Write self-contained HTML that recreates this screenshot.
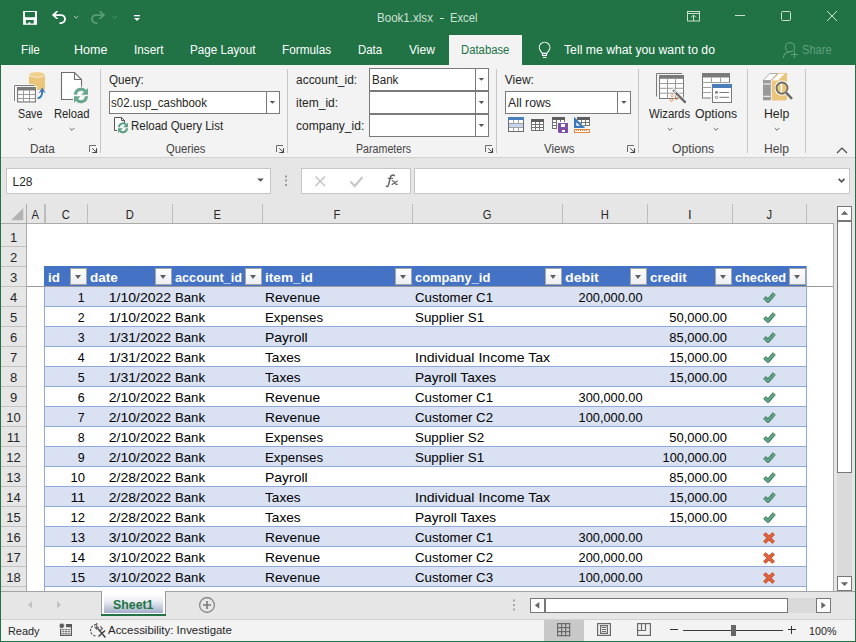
<!DOCTYPE html><html><head><meta charset="utf-8"><style>
*{margin:0;padding:0;box-sizing:border-box}
html,body{width:856px;height:642px;overflow:hidden;background:#fff;font-family:"Liberation Sans",sans-serif}
.a{position:absolute}
.t{position:absolute;white-space:nowrap;line-height:normal;z-index:5}
svg{position:absolute;overflow:visible}
</style></head><body><div class="a" style="left:0px;top:0px;width:856px;height:65px;background:#217346;"></div>
<div class="a" style="left:1px;top:65px;width:854px;height:92px;background:#f3f3f3;"></div>
<div class="a" style="left:1px;top:157px;width:854px;height:1px;background:#d2d2d2;"></div>
<div class="a" style="left:1px;top:158px;width:854px;height:45px;background:#e6e6e6;"></div>
<div class="a" style="left:1px;top:203px;width:854px;height:388px;background:#e6e6e6;"></div>
<div class="a" style="left:1px;top:591px;width:854px;height:1px;background:#a3a3a3;"></div>
<div class="a" style="left:1px;top:592px;width:854px;height:27px;background:#e6e6e6;"></div>
<div class="a" style="left:1px;top:619px;width:854px;height:1px;background:#d0d0d0;"></div>
<div class="a" style="left:1px;top:620px;width:854px;height:21px;background:#f3f3f3;"></div>
<div class="t" style="left:377.04px;top:11.14px;font-size:12px;color:#cfe1d5;font-weight:400;transform:scaleX(0.9637);transform-origin:left top;">Book1.xlsx</div>
<div class="a" style="left:440px;top:18px;width:3.5px;height:1px;background:#cfe1d5;"></div>
<div class="t" style="left:450.05px;top:11.14px;font-size:12px;color:#cfe1d5;font-weight:400;transform:scaleX(0.9336);transform-origin:left top;">Excel</div>
<div class="t" style="left:20.83px;top:43.44px;font-size:12px;color:#ffffff;font-weight:400;transform:scaleX(0.9737);transform-origin:left top;">File</div>
<div class="t" style="left:74.00px;top:43.44px;font-size:12px;color:#ffffff;font-weight:400;transform:scaleX(1.0433);transform-origin:left top;">Home</div>
<div class="t" style="left:134.03px;top:43.44px;font-size:12px;color:#ffffff;font-weight:400;transform:scaleX(0.9809);transform-origin:left top;">Insert</div>
<div class="t" style="left:190.03px;top:43.44px;font-size:12px;color:#ffffff;font-weight:400;transform:scaleX(0.9709);transform-origin:left top;">Page Layout</div>
<div class="t" style="left:282.03px;top:43.44px;font-size:12px;color:#ffffff;font-weight:400;transform:scaleX(0.9836);transform-origin:left top;">Formulas</div>
<div class="t" style="left:358.29px;top:43.44px;font-size:12px;color:#ffffff;font-weight:400;transform:scaleX(0.9529);transform-origin:left top;">Data</div>
<div class="t" style="left:408.52px;top:43.44px;font-size:12px;color:#ffffff;font-weight:400;transform:scaleX(1.0066);transform-origin:left top;">View</div>
<div class="a" style="left:449px;top:35px;width:73px;height:30px;background:#f3f3f3;"></div>
<div class="t" style="left:461.05px;top:43.44px;font-size:12px;color:#217346;font-weight:400;transform:scaleX(0.9422);transform-origin:left top;">Database</div>
<div class="t" style="left:563.61px;top:43.44px;font-size:12px;color:#ffffff;font-weight:400;transform:scaleX(1.0196);transform-origin:left top;">Tell me what you want to do</div>
<div class="t" style="left:801.86px;top:42.74px;font-size:12px;color:#5f9f7a;font-weight:400;transform:scaleX(0.9237);transform-origin:left top;">Share</div>
<div class="a" style="left:100px;top:69px;width:1px;height:84px;background:#c6c6c6;"></div>
<div class="a" style="left:287px;top:69px;width:1px;height:84px;background:#c6c6c6;"></div>
<div class="a" style="left:496px;top:69px;width:1px;height:84px;background:#c6c6c6;"></div>
<div class="a" style="left:638px;top:69px;width:1px;height:84px;background:#c6c6c6;"></div>
<div class="a" style="left:747px;top:69px;width:1px;height:84px;background:#c6c6c6;"></div>
<div class="a" style="left:805px;top:69px;width:1px;height:84px;background:#c6c6c6;"></div>
<div class="t" style="left:29.53px;top:142.44px;font-size:12px;color:#444444;font-weight:400;transform:scaleX(0.9734);transform-origin:left top;">Data</div>
<div class="t" style="left:165.55px;top:142.44px;font-size:12px;color:#444444;font-weight:400;transform:scaleX(0.9374);transform-origin:left top;">Queries</div>
<div class="t" style="left:356.32px;top:142.44px;font-size:12px;color:#444444;font-weight:400;transform:scaleX(0.8883);transform-origin:left top;">Parameters</div>
<div class="t" style="left:543.54px;top:142.44px;font-size:12px;color:#444444;font-weight:400;transform:scaleX(0.9566);transform-origin:left top;">Views</div>
<div class="t" style="left:671.91px;top:142.44px;font-size:12px;color:#444444;font-weight:400;transform:scaleX(1.0173);transform-origin:left top;">Options</div>
<div class="t" style="left:763.51px;top:142.44px;font-size:12px;color:#444444;font-weight:400;transform:scaleX(1.0115);transform-origin:left top;">Help</div>
<div class="t" style="left:17.97px;top:106.74px;font-size:12px;color:#262626;font-weight:400;transform:scaleX(0.8940);transform-origin:left top;">Save</div>
<div class="t" style="left:54.15px;top:106.74px;font-size:12px;color:#262626;font-weight:400;transform:scaleX(0.9360);transform-origin:left top;">Reload</div>
<div class="t" style="left:109.24px;top:73.34px;font-size:12px;color:#262626;font-weight:400;transform:scaleX(0.9670);transform-origin:left top;">Query:</div>
<div class="a" style="left:109px;top:91px;width:171px;height:23px;background:#fff;border:1px solid #7a7a7a"></div>
<div class="a" style="left:266px;top:92px;width:1px;height:21px;background:#7a7a7a;"></div>
<div class="t" style="left:111.34px;top:95.74px;font-size:12px;color:#262626;font-weight:400;transform:scaleX(0.9595);transform-origin:left top;">s02.usp_cashbook</div>
<div class="t" style="left:131.24px;top:118.64px;font-size:12px;color:#262626;font-weight:400;transform:scaleX(0.9591);transform-origin:left top;">Reload Query List</div>
<div class="t" style="left:295.82px;top:72.74px;font-size:12px;color:#262626;font-weight:400;transform:scaleX(0.9962);transform-origin:left top;">account_id:</div>
<div class="t" style="left:295.82px;top:95.84px;font-size:12px;color:#262626;font-weight:400;transform:scaleX(1.0031);transform-origin:left top;">item_id:</div>
<div class="t" style="left:295.82px;top:118.64px;font-size:12px;color:#262626;font-weight:400;transform:scaleX(1.0032);transform-origin:left top;">company_id:</div>
<div class="a" style="left:369px;top:68px;width:120px;height:23px;background:#fff;border:1px solid #7a7a7a"></div>
<div class="a" style="left:475px;top:69px;width:1px;height:21px;background:#7a7a7a;"></div>
<div class="a" style="left:369px;top:91px;width:120px;height:23px;background:#fff;border:1px solid #7a7a7a"></div>
<div class="a" style="left:475px;top:92px;width:1px;height:21px;background:#7a7a7a;"></div>
<div class="a" style="left:369px;top:114px;width:120px;height:23px;background:#fff;border:1px solid #7a7a7a"></div>
<div class="a" style="left:475px;top:115px;width:1px;height:21px;background:#7a7a7a;"></div>
<div class="t" style="left:372.04px;top:72.74px;font-size:12px;color:#262626;font-weight:400;transform:scaleX(0.9659);transform-origin:left top;">Bank</div>
<div class="t" style="left:504.82px;top:73.34px;font-size:12px;color:#262626;font-weight:400;">View:</div>
<div class="a" style="left:505px;top:91px;width:126px;height:23px;background:#fff;border:1px solid #7a7a7a"></div>
<div class="a" style="left:617px;top:92px;width:1px;height:21px;background:#7a7a7a;"></div>
<div class="t" style="left:507.51px;top:95.74px;font-size:12px;color:#262626;font-weight:400;transform:scaleX(1.0230);transform-origin:left top;">All rows</div>
<div class="t" style="left:649.14px;top:106.84px;font-size:12px;color:#262626;font-weight:400;transform:scaleX(0.9485);transform-origin:left top;">Wizards</div>
<div class="t" style="left:695.21px;top:106.84px;font-size:12px;color:#262626;font-weight:400;transform:scaleX(1.0198);transform-origin:left top;">Options</div>
<div class="t" style="left:763.81px;top:106.84px;font-size:12px;color:#262626;font-weight:400;transform:scaleX(1.0241);transform-origin:left top;">Help</div>
<div class="a" style="left:6px;top:168px;width:265px;height:26px;background:#fff;border:1px solid #c6c6c6"></div>
<div class="t" style="left:12.52px;top:175.14px;font-size:12px;color:#262626;font-weight:400;">L28</div>
<div class="a" style="left:301px;top:168px;width:110px;height:26px;background:#fff;border:1px solid #c6c6c6"></div>
<div class="a" style="left:414px;top:168px;width:436px;height:26px;background:#fff;border:1px solid #c6c6c6"></div>
<div class="a" style="left:27px;top:224px;width:806px;height:367px;background:#fff;"></div>
<div class="a" style="left:1px;top:223px;width:833px;height:1px;background:#ababab;"></div>
<div class="a" style="left:44px;top:204px;width:1px;height:19px;background:#bdbdbd;"></div>
<div class="t" style="left:30.96px;top:207.24px;font-size:13px;color:#262626;font-weight:400;transform:scaleX(0.86);transform-origin:center top;">A</div>
<div class="a" style="left:87px;top:204px;width:1px;height:19px;background:#bdbdbd;"></div>
<div class="t" style="left:61.10px;top:207.24px;font-size:13px;color:#262626;font-weight:400;transform:scaleX(0.86);transform-origin:center top;">C</div>
<div class="a" style="left:172px;top:204px;width:1px;height:19px;background:#bdbdbd;"></div>
<div class="t" style="left:125.10px;top:207.24px;font-size:13px;color:#262626;font-weight:400;transform:scaleX(0.86);transform-origin:center top;">D</div>
<div class="a" style="left:262px;top:204px;width:1px;height:19px;background:#bdbdbd;"></div>
<div class="t" style="left:212.96px;top:207.24px;font-size:13px;color:#262626;font-weight:400;transform:scaleX(0.86);transform-origin:center top;">E</div>
<div class="a" style="left:412px;top:204px;width:1px;height:19px;background:#bdbdbd;"></div>
<div class="t" style="left:333.32px;top:207.24px;font-size:13px;color:#262626;font-weight:400;transform:scaleX(0.86);transform-origin:center top;">F</div>
<div class="a" style="left:562px;top:204px;width:1px;height:19px;background:#bdbdbd;"></div>
<div class="t" style="left:482.24px;top:207.24px;font-size:13px;color:#262626;font-weight:400;transform:scaleX(0.86);transform-origin:center top;">G</div>
<div class="a" style="left:647px;top:204px;width:1px;height:19px;background:#bdbdbd;"></div>
<div class="t" style="left:600.10px;top:207.24px;font-size:13px;color:#262626;font-weight:400;transform:scaleX(0.86);transform-origin:center top;">H</div>
<div class="a" style="left:732px;top:204px;width:1px;height:19px;background:#bdbdbd;"></div>
<div class="t" style="left:687.99px;top:207.24px;font-size:13px;color:#262626;font-weight:400;">I</div>
<div class="a" style="left:806px;top:204px;width:1px;height:19px;background:#bdbdbd;"></div>
<div class="t" style="left:766.05px;top:207.24px;font-size:13px;color:#262626;font-weight:400;transform:scaleX(0.86);transform-origin:center top;">J</div>
<div class="a" style="left:26px;top:204px;width:1px;height:387px;background:#ababab;"></div>
<div class="a" style="left:45px;top:204px;width:1px;height:19px;background:#bdbdbd;"></div>
<svg class="a" style="left:0;top:0" width="30" height="225"><path d="M23.3 208V220.3H11Z" fill="#b3b3b3"/></svg>
<div class="a" style="left:833px;top:223px;width:1px;height:368px;background:#ababab;"></div>
<div class="a" style="left:1px;top:246px;width:25px;height:1px;background:#c3c3c3;"></div>
<div class="t" style="left:9.88px;top:230.24px;font-size:13px;color:#262626;font-weight:400;">1</div>
<div class="a" style="left:1px;top:266px;width:25px;height:1px;background:#c3c3c3;"></div>
<div class="t" style="left:9.88px;top:250.24px;font-size:13px;color:#262626;font-weight:400;">2</div>
<div class="a" style="left:1px;top:286px;width:25px;height:1px;background:#c3c3c3;"></div>
<div class="t" style="left:9.88px;top:270.24px;font-size:13px;color:#262626;font-weight:400;">3</div>
<div class="a" style="left:1px;top:306px;width:25px;height:1px;background:#c3c3c3;"></div>
<div class="t" style="left:9.88px;top:290.24px;font-size:13px;color:#262626;font-weight:400;">4</div>
<div class="a" style="left:1px;top:326px;width:25px;height:1px;background:#c3c3c3;"></div>
<div class="t" style="left:9.88px;top:310.24px;font-size:13px;color:#262626;font-weight:400;">5</div>
<div class="a" style="left:1px;top:346px;width:25px;height:1px;background:#c3c3c3;"></div>
<div class="t" style="left:9.88px;top:330.24px;font-size:13px;color:#262626;font-weight:400;">6</div>
<div class="a" style="left:1px;top:366px;width:25px;height:1px;background:#c3c3c3;"></div>
<div class="t" style="left:9.88px;top:350.24px;font-size:13px;color:#262626;font-weight:400;">7</div>
<div class="a" style="left:1px;top:386px;width:25px;height:1px;background:#c3c3c3;"></div>
<div class="t" style="left:9.88px;top:370.24px;font-size:13px;color:#262626;font-weight:400;">8</div>
<div class="a" style="left:1px;top:406px;width:25px;height:1px;background:#c3c3c3;"></div>
<div class="t" style="left:9.88px;top:390.24px;font-size:13px;color:#262626;font-weight:400;">9</div>
<div class="a" style="left:1px;top:426px;width:25px;height:1px;background:#c3c3c3;"></div>
<div class="t" style="left:6.27px;top:410.24px;font-size:13px;color:#262626;font-weight:400;">10</div>
<div class="a" style="left:1px;top:446px;width:25px;height:1px;background:#c3c3c3;"></div>
<div class="t" style="left:6.75px;top:430.24px;font-size:13px;color:#262626;font-weight:400;">11</div>
<div class="a" style="left:1px;top:466px;width:25px;height:1px;background:#c3c3c3;"></div>
<div class="t" style="left:6.27px;top:450.24px;font-size:13px;color:#262626;font-weight:400;">12</div>
<div class="a" style="left:1px;top:486px;width:25px;height:1px;background:#c3c3c3;"></div>
<div class="t" style="left:6.27px;top:470.24px;font-size:13px;color:#262626;font-weight:400;">13</div>
<div class="a" style="left:1px;top:506px;width:25px;height:1px;background:#c3c3c3;"></div>
<div class="t" style="left:6.27px;top:490.24px;font-size:13px;color:#262626;font-weight:400;">14</div>
<div class="a" style="left:1px;top:526px;width:25px;height:1px;background:#c3c3c3;"></div>
<div class="t" style="left:6.27px;top:510.24px;font-size:13px;color:#262626;font-weight:400;">15</div>
<div class="a" style="left:1px;top:546px;width:25px;height:1px;background:#c3c3c3;"></div>
<div class="t" style="left:6.27px;top:530.24px;font-size:13px;color:#262626;font-weight:400;">16</div>
<div class="a" style="left:1px;top:566px;width:25px;height:1px;background:#c3c3c3;"></div>
<div class="t" style="left:6.27px;top:550.24px;font-size:13px;color:#262626;font-weight:400;">17</div>
<div class="a" style="left:1px;top:586px;width:25px;height:1px;background:#c3c3c3;"></div>
<div class="t" style="left:6.27px;top:570.24px;font-size:13px;color:#262626;font-weight:400;">18</div>
<div class="a" style="left:44px;top:266px;width:762px;height:20px;background:#4472c4;"></div>
<div class="t" style="left:48.27px;top:269.84px;font-size:13px;color:#ffffff;font-weight:700;transform:scaleX(1.0264);transform-origin:left top;">id</div>
<div class="a" style="left:70px;top:268px;width:17px;height:17px;background:linear-gradient(#ffffff,#eceef2);border:1px solid #a6a6a6"></div>
<div class="a" style="left:74.5px;top:275px;width:0;height:0;border-left:3.5px solid transparent;border-right:3.5px solid transparent;border-top:4px solid #606060"></div>
<div class="t" style="left:89.86px;top:269.84px;font-size:13px;color:#ffffff;font-weight:700;transform:scaleX(1.0430);transform-origin:left top;">date</div>
<div class="a" style="left:155px;top:268px;width:17px;height:17px;background:linear-gradient(#ffffff,#eceef2);border:1px solid #a6a6a6"></div>
<div class="a" style="left:159.5px;top:275px;width:0;height:0;border-left:3.5px solid transparent;border-right:3.5px solid transparent;border-top:4px solid #606060"></div>
<div class="t" style="left:175.09px;top:269.84px;font-size:13px;color:#ffffff;font-weight:700;transform:scaleX(0.9751);transform-origin:left top;">account_id</div>
<div class="a" style="left:245px;top:268px;width:17px;height:17px;background:linear-gradient(#ffffff,#eceef2);border:1px solid #a6a6a6"></div>
<div class="a" style="left:249.5px;top:275px;width:0;height:0;border-left:3.5px solid transparent;border-right:3.5px solid transparent;border-top:4px solid #606060"></div>
<div class="t" style="left:265.05px;top:269.84px;font-size:13px;color:#ffffff;font-weight:700;transform:scaleX(1.0500);transform-origin:left top;">item_id</div>
<div class="a" style="left:395px;top:268px;width:17px;height:17px;background:linear-gradient(#ffffff,#eceef2);border:1px solid #a6a6a6"></div>
<div class="a" style="left:399.5px;top:275px;width:0;height:0;border-left:3.5px solid transparent;border-right:3.5px solid transparent;border-top:4px solid #606060"></div>
<div class="t" style="left:414.58px;top:269.84px;font-size:13px;color:#ffffff;font-weight:700;transform:scaleX(0.9931);transform-origin:left top;">company_id</div>
<div class="a" style="left:545px;top:268px;width:17px;height:17px;background:linear-gradient(#ffffff,#eceef2);border:1px solid #a6a6a6"></div>
<div class="a" style="left:549.5px;top:275px;width:0;height:0;border-left:3.5px solid transparent;border-right:3.5px solid transparent;border-top:4px solid #606060"></div>
<div class="t" style="left:564.83px;top:269.84px;font-size:13px;color:#ffffff;font-weight:700;transform:scaleX(1.0892);transform-origin:left top;">debit</div>
<div class="a" style="left:630px;top:268px;width:17px;height:17px;background:linear-gradient(#ffffff,#eceef2);border:1px solid #a6a6a6"></div>
<div class="a" style="left:634.5px;top:275px;width:0;height:0;border-left:3.5px solid transparent;border-right:3.5px solid transparent;border-top:4px solid #606060"></div>
<div class="t" style="left:649.66px;top:269.84px;font-size:13px;color:#ffffff;font-weight:700;transform:scaleX(1.0388);transform-origin:left top;">credit</div>
<div class="a" style="left:715px;top:268px;width:17px;height:17px;background:linear-gradient(#ffffff,#eceef2);border:1px solid #a6a6a6"></div>
<div class="a" style="left:719.5px;top:275px;width:0;height:0;border-left:3.5px solid transparent;border-right:3.5px solid transparent;border-top:4px solid #606060"></div>
<div class="t" style="left:735.19px;top:269.84px;font-size:13px;color:#ffffff;font-weight:700;transform:scaleX(0.9803);transform-origin:left top;">checked</div>
<div class="a" style="left:789px;top:268px;width:17px;height:17px;background:linear-gradient(#ffffff,#eceef2);border:1px solid #a6a6a6"></div>
<div class="a" style="left:793.5px;top:275px;width:0;height:0;border-left:3.5px solid transparent;border-right:3.5px solid transparent;border-top:4px solid #606060"></div>
<div class="a" style="left:44px;top:286px;width:762px;height:20px;background:#d9e1f2;"></div>
<div class="t" style="left:77.48px;top:289.78px;font-size:13.5px;color:#000;font-weight:400;transform:scaleX(0.9168);transform-origin:right top;">1</div>
<div class="t" style="left:110.50px;top:289.78px;font-size:13.5px;color:#000;font-weight:400;transform:scaleX(1.0376);transform-origin:right top;">1/10/2022</div>
<div class="t" style="left:175.07px;top:289.78px;font-size:13.5px;color:#000;font-weight:400;transform:scaleX(0.9764);transform-origin:left top;">Bank</div>
<div class="t" style="left:265.05px;top:289.78px;font-size:13.5px;color:#000;font-weight:400;transform:scaleX(1.0195);transform-origin:left top;">Revenue</div>
<div class="t" style="left:414.77px;top:289.78px;font-size:13.5px;color:#000;font-weight:400;transform:scaleX(0.9815);transform-origin:left top;">Customer C1</div>
<div class="t" style="left:574.53px;top:289.78px;font-size:13.5px;color:#000;font-weight:400;transform:scaleX(0.9474);transform-origin:right top;">200,000.00</div>
<div class="a" style="left:44px;top:306px;width:762px;height:20px;background:#ffffff;"></div>
<div class="t" style="left:77.48px;top:309.78px;font-size:13.5px;color:#000;font-weight:400;transform:scaleX(0.9168);transform-origin:right top;">2</div>
<div class="t" style="left:110.50px;top:309.78px;font-size:13.5px;color:#000;font-weight:400;transform:scaleX(1.0376);transform-origin:right top;">1/10/2022</div>
<div class="t" style="left:175.07px;top:309.78px;font-size:13.5px;color:#000;font-weight:400;transform:scaleX(0.9764);transform-origin:left top;">Bank</div>
<div class="t" style="left:265.07px;top:309.78px;font-size:13.5px;color:#000;font-weight:400;transform:scaleX(0.9791);transform-origin:left top;">Expenses</div>
<div class="t" style="left:414.77px;top:309.78px;font-size:13.5px;color:#000;font-weight:400;transform:scaleX(0.9896);transform-origin:left top;">Supplier S1</div>
<div class="t" style="left:666.96px;top:309.78px;font-size:13.5px;color:#000;font-weight:400;transform:scaleX(0.9613);transform-origin:right top;">50,000.00</div>
<div class="a" style="left:44px;top:326px;width:762px;height:20px;background:#d9e1f2;"></div>
<div class="t" style="left:77.48px;top:329.78px;font-size:13.5px;color:#000;font-weight:400;transform:scaleX(0.9168);transform-origin:right top;">3</div>
<div class="t" style="left:110.50px;top:329.78px;font-size:13.5px;color:#000;font-weight:400;transform:scaleX(1.0376);transform-origin:right top;">1/31/2022</div>
<div class="t" style="left:175.07px;top:329.78px;font-size:13.5px;color:#000;font-weight:400;transform:scaleX(0.9764);transform-origin:left top;">Bank</div>
<div class="t" style="left:265.04px;top:329.78px;font-size:13.5px;color:#000;font-weight:400;transform:scaleX(1.0327);transform-origin:left top;">Payroll</div>
<div class="t" style="left:666.96px;top:329.78px;font-size:13.5px;color:#000;font-weight:400;transform:scaleX(0.9613);transform-origin:right top;">85,000.00</div>
<div class="a" style="left:44px;top:346px;width:762px;height:20px;background:#ffffff;"></div>
<div class="t" style="left:77.48px;top:349.78px;font-size:13.5px;color:#000;font-weight:400;transform:scaleX(0.9168);transform-origin:right top;">4</div>
<div class="t" style="left:110.50px;top:349.78px;font-size:13.5px;color:#000;font-weight:400;transform:scaleX(1.0376);transform-origin:right top;">1/31/2022</div>
<div class="t" style="left:175.07px;top:349.78px;font-size:13.5px;color:#000;font-weight:400;transform:scaleX(0.9764);transform-origin:left top;">Bank</div>
<div class="t" style="left:265.05px;top:349.78px;font-size:13.5px;color:#000;font-weight:400;transform:scaleX(1.0117);transform-origin:left top;">Taxes</div>
<div class="t" style="left:414.74px;top:349.78px;font-size:13.5px;color:#000;font-weight:400;transform:scaleX(1.0428);transform-origin:left top;">Individual Income Tax</div>
<div class="t" style="left:666.96px;top:349.78px;font-size:13.5px;color:#000;font-weight:400;transform:scaleX(0.9613);transform-origin:right top;">15,000.00</div>
<div class="a" style="left:44px;top:366px;width:762px;height:20px;background:#d9e1f2;"></div>
<div class="t" style="left:77.48px;top:369.78px;font-size:13.5px;color:#000;font-weight:400;transform:scaleX(0.9168);transform-origin:right top;">5</div>
<div class="t" style="left:110.50px;top:369.78px;font-size:13.5px;color:#000;font-weight:400;transform:scaleX(1.0376);transform-origin:right top;">1/31/2022</div>
<div class="t" style="left:175.07px;top:369.78px;font-size:13.5px;color:#000;font-weight:400;transform:scaleX(0.9764);transform-origin:left top;">Bank</div>
<div class="t" style="left:265.05px;top:369.78px;font-size:13.5px;color:#000;font-weight:400;transform:scaleX(1.0117);transform-origin:left top;">Taxes</div>
<div class="t" style="left:414.75px;top:369.78px;font-size:13.5px;color:#000;font-weight:400;transform:scaleX(1.0131);transform-origin:left top;">Payroll Taxes</div>
<div class="t" style="left:666.96px;top:369.78px;font-size:13.5px;color:#000;font-weight:400;transform:scaleX(0.9613);transform-origin:right top;">15,000.00</div>
<div class="a" style="left:44px;top:386px;width:762px;height:20px;background:#ffffff;"></div>
<div class="t" style="left:77.48px;top:389.78px;font-size:13.5px;color:#000;font-weight:400;transform:scaleX(0.9168);transform-origin:right top;">6</div>
<div class="t" style="left:110.50px;top:389.78px;font-size:13.5px;color:#000;font-weight:400;transform:scaleX(1.0376);transform-origin:right top;">2/10/2022</div>
<div class="t" style="left:175.07px;top:389.78px;font-size:13.5px;color:#000;font-weight:400;transform:scaleX(0.9764);transform-origin:left top;">Bank</div>
<div class="t" style="left:265.05px;top:389.78px;font-size:13.5px;color:#000;font-weight:400;transform:scaleX(1.0195);transform-origin:left top;">Revenue</div>
<div class="t" style="left:414.77px;top:389.78px;font-size:13.5px;color:#000;font-weight:400;transform:scaleX(0.9815);transform-origin:left top;">Customer C1</div>
<div class="t" style="left:574.53px;top:389.78px;font-size:13.5px;color:#000;font-weight:400;transform:scaleX(0.9474);transform-origin:right top;">300,000.00</div>
<div class="a" style="left:44px;top:406px;width:762px;height:20px;background:#d9e1f2;"></div>
<div class="t" style="left:77.48px;top:409.78px;font-size:13.5px;color:#000;font-weight:400;transform:scaleX(0.9168);transform-origin:right top;">7</div>
<div class="t" style="left:110.50px;top:409.78px;font-size:13.5px;color:#000;font-weight:400;transform:scaleX(1.0376);transform-origin:right top;">2/10/2022</div>
<div class="t" style="left:175.07px;top:409.78px;font-size:13.5px;color:#000;font-weight:400;transform:scaleX(0.9764);transform-origin:left top;">Bank</div>
<div class="t" style="left:265.05px;top:409.78px;font-size:13.5px;color:#000;font-weight:400;transform:scaleX(1.0195);transform-origin:left top;">Revenue</div>
<div class="t" style="left:414.77px;top:409.78px;font-size:13.5px;color:#000;font-weight:400;transform:scaleX(0.9815);transform-origin:left top;">Customer C2</div>
<div class="t" style="left:574.53px;top:409.78px;font-size:13.5px;color:#000;font-weight:400;transform:scaleX(0.9474);transform-origin:right top;">100,000.00</div>
<div class="a" style="left:44px;top:426px;width:762px;height:20px;background:#ffffff;"></div>
<div class="t" style="left:77.48px;top:429.78px;font-size:13.5px;color:#000;font-weight:400;transform:scaleX(0.9168);transform-origin:right top;">8</div>
<div class="t" style="left:110.50px;top:429.78px;font-size:13.5px;color:#000;font-weight:400;transform:scaleX(1.0376);transform-origin:right top;">2/10/2022</div>
<div class="t" style="left:175.07px;top:429.78px;font-size:13.5px;color:#000;font-weight:400;transform:scaleX(0.9764);transform-origin:left top;">Bank</div>
<div class="t" style="left:265.07px;top:429.78px;font-size:13.5px;color:#000;font-weight:400;transform:scaleX(0.9791);transform-origin:left top;">Expenses</div>
<div class="t" style="left:414.77px;top:429.78px;font-size:13.5px;color:#000;font-weight:400;transform:scaleX(0.9896);transform-origin:left top;">Supplier S2</div>
<div class="t" style="left:666.96px;top:429.78px;font-size:13.5px;color:#000;font-weight:400;transform:scaleX(0.9613);transform-origin:right top;">50,000.00</div>
<div class="a" style="left:44px;top:446px;width:762px;height:20px;background:#d9e1f2;"></div>
<div class="t" style="left:77.48px;top:449.78px;font-size:13.5px;color:#000;font-weight:400;transform:scaleX(0.9168);transform-origin:right top;">9</div>
<div class="t" style="left:110.50px;top:449.78px;font-size:13.5px;color:#000;font-weight:400;transform:scaleX(1.0376);transform-origin:right top;">2/10/2022</div>
<div class="t" style="left:175.07px;top:449.78px;font-size:13.5px;color:#000;font-weight:400;transform:scaleX(0.9764);transform-origin:left top;">Bank</div>
<div class="t" style="left:265.07px;top:449.78px;font-size:13.5px;color:#000;font-weight:400;transform:scaleX(0.9791);transform-origin:left top;">Expenses</div>
<div class="t" style="left:414.77px;top:449.78px;font-size:13.5px;color:#000;font-weight:400;transform:scaleX(0.9896);transform-origin:left top;">Supplier S1</div>
<div class="t" style="left:659.43px;top:449.78px;font-size:13.5px;color:#000;font-weight:400;transform:scaleX(0.9474);transform-origin:right top;">100,000.00</div>
<div class="a" style="left:44px;top:466px;width:762px;height:20px;background:#ffffff;"></div>
<div class="t" style="left:69.99px;top:469.78px;font-size:13.5px;color:#000;font-weight:400;transform:scaleX(0.9677);transform-origin:right top;">10</div>
<div class="t" style="left:110.50px;top:469.78px;font-size:13.5px;color:#000;font-weight:400;transform:scaleX(1.0376);transform-origin:right top;">2/28/2022</div>
<div class="t" style="left:175.07px;top:469.78px;font-size:13.5px;color:#000;font-weight:400;transform:scaleX(0.9764);transform-origin:left top;">Bank</div>
<div class="t" style="left:265.04px;top:469.78px;font-size:13.5px;color:#000;font-weight:400;transform:scaleX(1.0327);transform-origin:left top;">Payroll</div>
<div class="t" style="left:666.96px;top:469.78px;font-size:13.5px;color:#000;font-weight:400;transform:scaleX(0.9613);transform-origin:right top;">85,000.00</div>
<div class="a" style="left:44px;top:486px;width:762px;height:20px;background:#d9e1f2;"></div>
<div class="t" style="left:71.05px;top:489.78px;font-size:13.5px;color:#000;font-weight:400;transform:scaleX(1.0436);transform-origin:right top;">11</div>
<div class="t" style="left:110.50px;top:489.78px;font-size:13.5px;color:#000;font-weight:400;transform:scaleX(1.0376);transform-origin:right top;">2/28/2022</div>
<div class="t" style="left:175.07px;top:489.78px;font-size:13.5px;color:#000;font-weight:400;transform:scaleX(0.9764);transform-origin:left top;">Bank</div>
<div class="t" style="left:265.05px;top:489.78px;font-size:13.5px;color:#000;font-weight:400;transform:scaleX(1.0117);transform-origin:left top;">Taxes</div>
<div class="t" style="left:414.74px;top:489.78px;font-size:13.5px;color:#000;font-weight:400;transform:scaleX(1.0428);transform-origin:left top;">Individual Income Tax</div>
<div class="t" style="left:666.96px;top:489.78px;font-size:13.5px;color:#000;font-weight:400;transform:scaleX(0.9613);transform-origin:right top;">15,000.00</div>
<div class="a" style="left:44px;top:506px;width:762px;height:20px;background:#ffffff;"></div>
<div class="t" style="left:69.99px;top:509.78px;font-size:13.5px;color:#000;font-weight:400;transform:scaleX(0.9677);transform-origin:right top;">12</div>
<div class="t" style="left:110.50px;top:509.78px;font-size:13.5px;color:#000;font-weight:400;transform:scaleX(1.0376);transform-origin:right top;">2/28/2022</div>
<div class="t" style="left:175.07px;top:509.78px;font-size:13.5px;color:#000;font-weight:400;transform:scaleX(0.9764);transform-origin:left top;">Bank</div>
<div class="t" style="left:265.05px;top:509.78px;font-size:13.5px;color:#000;font-weight:400;transform:scaleX(1.0117);transform-origin:left top;">Taxes</div>
<div class="t" style="left:414.75px;top:509.78px;font-size:13.5px;color:#000;font-weight:400;transform:scaleX(1.0131);transform-origin:left top;">Payroll Taxes</div>
<div class="t" style="left:666.96px;top:509.78px;font-size:13.5px;color:#000;font-weight:400;transform:scaleX(0.9613);transform-origin:right top;">15,000.00</div>
<div class="a" style="left:44px;top:526px;width:762px;height:20px;background:#d9e1f2;"></div>
<div class="t" style="left:69.99px;top:529.78px;font-size:13.5px;color:#000;font-weight:400;transform:scaleX(0.9677);transform-origin:right top;">13</div>
<div class="t" style="left:110.50px;top:529.78px;font-size:13.5px;color:#000;font-weight:400;transform:scaleX(1.0376);transform-origin:right top;">3/10/2022</div>
<div class="t" style="left:175.07px;top:529.78px;font-size:13.5px;color:#000;font-weight:400;transform:scaleX(0.9764);transform-origin:left top;">Bank</div>
<div class="t" style="left:265.05px;top:529.78px;font-size:13.5px;color:#000;font-weight:400;transform:scaleX(1.0195);transform-origin:left top;">Revenue</div>
<div class="t" style="left:414.77px;top:529.78px;font-size:13.5px;color:#000;font-weight:400;transform:scaleX(0.9815);transform-origin:left top;">Customer C1</div>
<div class="t" style="left:574.53px;top:529.78px;font-size:13.5px;color:#000;font-weight:400;transform:scaleX(0.9474);transform-origin:right top;">300,000.00</div>
<div class="a" style="left:44px;top:546px;width:762px;height:20px;background:#ffffff;"></div>
<div class="t" style="left:69.99px;top:549.78px;font-size:13.5px;color:#000;font-weight:400;transform:scaleX(0.9677);transform-origin:right top;">14</div>
<div class="t" style="left:110.50px;top:549.78px;font-size:13.5px;color:#000;font-weight:400;transform:scaleX(1.0376);transform-origin:right top;">3/10/2022</div>
<div class="t" style="left:175.07px;top:549.78px;font-size:13.5px;color:#000;font-weight:400;transform:scaleX(0.9764);transform-origin:left top;">Bank</div>
<div class="t" style="left:265.05px;top:549.78px;font-size:13.5px;color:#000;font-weight:400;transform:scaleX(1.0195);transform-origin:left top;">Revenue</div>
<div class="t" style="left:414.77px;top:549.78px;font-size:13.5px;color:#000;font-weight:400;transform:scaleX(0.9815);transform-origin:left top;">Customer C2</div>
<div class="t" style="left:574.53px;top:549.78px;font-size:13.5px;color:#000;font-weight:400;transform:scaleX(0.9474);transform-origin:right top;">200,000.00</div>
<div class="a" style="left:44px;top:566px;width:762px;height:20px;background:#d9e1f2;"></div>
<div class="t" style="left:69.99px;top:569.78px;font-size:13.5px;color:#000;font-weight:400;transform:scaleX(0.9677);transform-origin:right top;">15</div>
<div class="t" style="left:110.50px;top:569.78px;font-size:13.5px;color:#000;font-weight:400;transform:scaleX(1.0376);transform-origin:right top;">3/10/2022</div>
<div class="t" style="left:175.07px;top:569.78px;font-size:13.5px;color:#000;font-weight:400;transform:scaleX(0.9764);transform-origin:left top;">Bank</div>
<div class="t" style="left:265.05px;top:569.78px;font-size:13.5px;color:#000;font-weight:400;transform:scaleX(1.0195);transform-origin:left top;">Revenue</div>
<div class="t" style="left:414.77px;top:569.78px;font-size:13.5px;color:#000;font-weight:400;transform:scaleX(0.9815);transform-origin:left top;">Customer C3</div>
<div class="t" style="left:574.53px;top:569.78px;font-size:13.5px;color:#000;font-weight:400;transform:scaleX(0.9474);transform-origin:right top;">100,000.00</div>
<div class="a" style="left:44px;top:306px;width:762px;height:1px;background:#8ea9db;"></div>
<div class="a" style="left:44px;top:326px;width:762px;height:1px;background:#8ea9db;"></div>
<div class="a" style="left:44px;top:346px;width:762px;height:1px;background:#8ea9db;"></div>
<div class="a" style="left:44px;top:366px;width:762px;height:1px;background:#8ea9db;"></div>
<div class="a" style="left:44px;top:386px;width:762px;height:1px;background:#8ea9db;"></div>
<div class="a" style="left:44px;top:406px;width:762px;height:1px;background:#8ea9db;"></div>
<div class="a" style="left:44px;top:426px;width:762px;height:1px;background:#8ea9db;"></div>
<div class="a" style="left:44px;top:446px;width:762px;height:1px;background:#8ea9db;"></div>
<div class="a" style="left:44px;top:466px;width:762px;height:1px;background:#8ea9db;"></div>
<div class="a" style="left:44px;top:486px;width:762px;height:1px;background:#8ea9db;"></div>
<div class="a" style="left:44px;top:506px;width:762px;height:1px;background:#8ea9db;"></div>
<div class="a" style="left:44px;top:526px;width:762px;height:1px;background:#8ea9db;"></div>
<div class="a" style="left:44px;top:546px;width:762px;height:1px;background:#8ea9db;"></div>
<div class="a" style="left:44px;top:566px;width:762px;height:1px;background:#8ea9db;"></div>
<div class="a" style="left:44px;top:586px;width:762px;height:1px;background:#8ea9db;"></div>
<div class="a" style="left:27px;top:286px;width:806px;height:1px;background:#9c9c9c;"></div>
<div class="a" style="left:44px;top:287px;width:1px;height:304px;background:#8ea9db;"></div>
<div class="a" style="left:806px;top:266px;width:1px;height:20px;background:#8ea9db;"></div>
<div class="a" style="left:806px;top:287px;width:1px;height:304px;background:#8ea9db;"></div>
<svg class="a" style="left:0;top:0;z-index:4" width="856" height="642" viewBox="0 0 856 642"><rect x="23.1" y="11" width="13.9" height="13.8" fill="#fff"/>
<path d="M25 12.1H35V16.3L34 17.3H26L25 16.3Z" fill="#217346"/>
<path d="M25.9 20H33.7V23.6H30.3V22.2H28.4V23.6H25.9Z" fill="#217346"/>
<path d="M55 15.1H61A4 4 0 0 1 61 23.1H60.2" fill="none" stroke="#fff" stroke-width="1.9" stroke-linecap="round"/>
<path d="M51.9 15.1L56.2 11H58.3L55.6 14.1V16.1L58.3 18.9H56.2Z" fill="#fff"/>
<path d="M74 16L76.2 18.2L78.4 16" fill="none" stroke="#b8d3c3" stroke-width="1"/>
<path d="M102 15.1H96A4 4 0 0 0 96 23.1H96.8" fill="none" stroke="#5c9c77" stroke-width="1.9" stroke-linecap="round"/>
<path d="M105.1 15.1L100.8 11H98.7L101.4 14.1V16.1L98.7 18.9H100.8Z" fill="#5c9c77"/>
<path d="M112.5 16L114.7 18.2L116.9 16" fill="none" stroke="#4f926b" stroke-width="1"/>
<rect x="134" y="15" width="6" height="1.3" fill="#fff"/><path d="M134 18H140L137 21Z" fill="#fff"/>
<g fill="none" stroke="#c9dfd0" stroke-width="1"><rect x="687.5" y="11.5" width="12" height="9.5"/><path d="M687.5 13.5H699.5"/><path d="M693.5 21V15M691 17.5L693.5 15L696 17.5"/><path d="M735 15.5H745"/><rect x="781.5" y="11.5" width="9" height="9" rx="1.2"/><path d="M827 11L837 21M837 11L827 21"/></g>
<g fill="none" stroke="#fff" stroke-width="1.1"><path d="M542.3 53.3L540.5 50.9A5.3 5.3 0 1 1 548.7 50.9L546.9 53.3Z"/><rect x="542.5" y="53.5" width="4" height="2"/><path d="M543 57.5H546.4"/></g>
<g fill="none" stroke="#5f9f7a" stroke-width="1.1"><circle cx="790" cy="47.2" r="4.6"/><path d="M783.3 57.8C784 54 786.5 51.8 790.5 51.6"/><path d="M791 54.5H798M794.5 51V58"/></g><path d="M29 74.5V90H45V74.5Z" fill="#ebc57a"/>
<ellipse cx="37" cy="74.5" rx="8" ry="2.8" fill="#efcf8e" stroke="#fff" stroke-width="0.6"/>
<path d="M14.5 101V85.5H34" fill="none" stroke="#fff" stroke-width="2.5"/>
<path d="M14.5 101V85.5H34" fill="none" stroke="#7a7a7a" stroke-width="1"/>
<rect x="16" y="86" width="21" height="17.5" fill="#fff"/>
<rect x="17.5" y="87.5" width="18" height="14.5" fill="#fff" stroke="#7a7a7a" stroke-width="1.2"/>
<rect x="17.5" y="87.5" width="18" height="3" fill="#7a7a7a"/>
<path d="M23.5 90.5V102M29.5 90.5V102M17.5 94.5H35.5M17.5 98.5H35.5" stroke="#9a9a9a" stroke-width="1" fill="none"/>
<path d="M37.5 98.5C40.5 98 42.3 95.5 42.2 91" fill="none" stroke="#fff" stroke-width="3.5"/>
<path d="M37.5 98.5C40.5 98 42.3 95.5 42.2 91" fill="none" stroke="#3b77bf" stroke-width="2"/>
<path d="M38.6 93.3L42.2 87.5L45.8 93.3L42.2 91.3Z" fill="#3b77bf"/>
<path d="M61.5 99.5V72.5H74.5L81.5 79.5V99.5Z" fill="#fff"/>
<path d="M73 99.5H61.5V72.5H74.5L81.5 79.5V86.5M74.5 72.5V79.5H81.5" fill="none" stroke="#6e6e6e" stroke-width="1.1"/>
<circle cx="81" cy="95.45" r="8" fill="#f3f3f3" opacity="0.0"/>
<path d="M75.50 94.70A5.50 5.50 0 0 1 85.21 91.16" fill="none" stroke="#6aa88e" stroke-width="3.0"/><path d="M88.00 88.10V94.70H81.30Z" fill="#6aa88e"/><path d="M86.50 96.20A5.50 5.50 0 0 1 76.79 99.74" fill="none" stroke="#6aa88e" stroke-width="3.0"/><path d="M74.00 102.80V96.20H80.70Z" fill="#6aa88e"/>
<path d="M114.5 130.5V117.5H121.5L124.5 120.5V124" fill="#fff" stroke="#555" stroke-width="1"/>
<path d="M121.5 117.5V120.5H124.5" fill="none" stroke="#555" stroke-width="1"/>
<path d="M114.5 130.5H117" stroke="#555" stroke-width="1"/>
<path d="M119.05 127.30A3.95 3.95 0 0 1 126.03 124.76" fill="none" stroke="#5a9e84" stroke-width="2.0"/><path d="M127.95 122.63V127.30H123.21Z" fill="#5a9e84"/><path d="M126.95 128.30A3.95 3.95 0 0 1 119.97 130.84" fill="none" stroke="#5a9e84" stroke-width="2.0"/><path d="M118.05 132.97V128.30H122.79Z" fill="#5a9e84"/>
<path d="M89.5 152V145.5H96" fill="none" stroke="#6a6a6a" stroke-width="1"/><path d="M92.3 148.3L95.8 151.8" fill="none" stroke="#444" stroke-width="1"/><path d="M96.5 148.3V152.5H92.3" fill="none" stroke="#444" stroke-width="1.1"/>
<path d="M276.5 152V145.5H283" fill="none" stroke="#6a6a6a" stroke-width="1"/><path d="M279.3 148.3L282.8 151.8" fill="none" stroke="#444" stroke-width="1"/><path d="M283.5 148.3V152.5H279.3" fill="none" stroke="#444" stroke-width="1.1"/>
<path d="M485.5 152V145.5H492" fill="none" stroke="#6a6a6a" stroke-width="1"/><path d="M488.3 148.3L491.8 151.8" fill="none" stroke="#444" stroke-width="1"/><path d="M492.5 148.3V152.5H488.3" fill="none" stroke="#444" stroke-width="1.1"/>
<path d="M627.5 152V145.5H634" fill="none" stroke="#6a6a6a" stroke-width="1"/><path d="M630.3 148.3L633.8 151.8" fill="none" stroke="#444" stroke-width="1"/><path d="M634.5 148.3V152.5H630.3" fill="none" stroke="#444" stroke-width="1.1"/>
<path d="M269.70 100.90H275.10L272.4 103.80Z" fill="#555"/>
<path d="M478.70 77.90H484.10L481.4 80.80Z" fill="#555"/>
<path d="M478.70 101.00H484.10L481.4 103.90Z" fill="#555"/>
<path d="M478.70 124.00H484.10L481.4 126.90Z" fill="#555"/>
<path d="M621.20 100.90H626.60L623.9 103.80Z" fill="#555"/>
<path d="M257.20 178.50H263.80L260.5 181.80Z" fill="#555"/>
<path d="M838.6 178.8L841.55 181.8L844.5 178.8" fill="none" stroke="#555" stroke-width="1.8"/>
<path d="M27.7 128L30 130.3L32.3 128" fill="none" stroke="#666" stroke-width="1"/>
<path d="M69.7 128L72 130.3L74.3 128" fill="none" stroke="#666" stroke-width="1"/>
<path d="M667.7 128L670 130.3L672.3 128" fill="none" stroke="#666" stroke-width="1"/>
<path d="M713.7 128L716 130.3L718.3 128" fill="none" stroke="#666" stroke-width="1"/>
<path d="M774.7 128L777 130.3L779.3 128" fill="none" stroke="#666" stroke-width="1"/>
<path d="M837 153L842 148L847 153" fill="none" stroke="#444" stroke-width="1.1"/>
<path d="M656.5 96.5V73.5H682" fill="none" stroke="#7a7a7a" stroke-width="1"/>
<rect x="659.5" y="75.5" width="24" height="23" fill="#fff" stroke="#7a7a7a" stroke-width="1"/>
<rect x="659.5" y="75.5" width="24" height="3.3" fill="#7a7a7a"/>
<path d="M667.5 78.8V98.5M675.5 78.8V98.5M659.5 83.5H683.5M659.5 88.3H683.5M659.5 93.2H683.5" fill="none" stroke="#9a9a9a" stroke-width="1"/>
<path d="M673.5 90.5L685 102" stroke="#fff" stroke-width="4.2" stroke-linecap="round"/>
<path d="M673.8 90.8L685 102" stroke="#707070" stroke-width="2.6" stroke-linecap="round"/>
<path d="M673.8 90.8L675.8 92.8" stroke="#fff" stroke-width="1.2"/>
<path d="M672.3 94.1L673.8 95.6L672.3 97.1L670.8 95.6Z" fill="none" stroke="#e8853a" stroke-width="0.9"/>
<path d="M676.5 97.0L678.0 98.5L676.5 100.0L675.0 98.5Z" fill="none" stroke="#e8853a" stroke-width="0.9"/>
<path d="M671.5 98.8L673.0 100.3L671.5 101.8L670.0 100.3Z" fill="none" stroke="#e8853a" stroke-width="0.9"/>
<rect x="702.5" y="73.5" width="27" height="24.5" fill="#fff" stroke="#7a7a7a" stroke-width="1"/>
<rect x="702" y="73" width="28" height="4.5" fill="#7a7a7a"/>
<path d="M711.5 77.5V82M720.5 77.5V82M702.5 82.5H729.5M702.5 87.5H712M702.5 92.5H712" fill="none" stroke="#a0a0a0" stroke-width="1"/>
<rect x="711" y="83" width="22" height="20.5" fill="#f3f3f3"/>
<rect x="712.5" y="84.5" width="19" height="18" fill="#fff" stroke="#7a7a7a" stroke-width="1"/>
<rect x="712" y="84" width="20" height="4" fill="#4a7ebb"/>
<circle cx="716.5" cy="92.4" r="1.4" fill="#7a7a7a"/><circle cx="716.5" cy="97.4" r="1.2" fill="none" stroke="#7a7a7a" stroke-width="0.9"/>
<path d="M719.4 92.5H729M719.4 97.3H729" stroke="#7a7a7a" stroke-width="1"/>
<path d="M763 80.5L769.8 73.5H777.5L770.8 80.5Z" fill="#fff" stroke="#9a9a9a" stroke-width="0.8"/>
<path d="M763 80.5H770.8V100.3H763Z" fill="#999"/>
<path d="M763.5 84H770.3M763.5 96.3H770.3" stroke="#fff" stroke-width="1"/>
<path d="M771.8 80.5L778.5 73H787V99.5L785 100.5H771.8Z" fill="#ebc57a"/>
<path d="M772.5 80.5L779 73.8H784.5L778 80.5Z" fill="#fff"/>
<circle cx="782" cy="88.1" r="6.9" fill="none" stroke="#fff" stroke-width="1.2"/>
<rect x="780.6" y="83.5" width="1.6" height="9" fill="#fff"/>
<circle cx="782" cy="88.1" r="5.6" fill="none" stroke="#6b6b6b" stroke-width="1.8"/>
<path d="M785.9 92.3L792 98.8" stroke="#fff" stroke-width="4"/>
<path d="M785.9 92.3L792 98.8" stroke="#6b6b6b" stroke-width="2.6"/>
<rect x="508" y="117" width="16" height="15" fill="#6d6d6d"/>
<rect x="509" y="120" width="14" height="11" fill="#a3a3a3"/>
<rect x="508" y="117" width="16" height="3" fill="#4a7ebb"/>
<g fill="#fff"><rect x="509" y="120" width="4" height="3"/><rect x="509" y="128" width="4" height="3"/><rect x="514" y="120" width="4" height="3"/><rect x="514" y="128" width="4" height="3"/><rect x="519" y="120" width="4" height="3"/><rect x="519" y="128" width="4" height="3"/></g>
<rect x="509" y="124" width="14" height="3" fill="#c5d7ee"/>
<rect x="531" y="119" width="13" height="12" fill="#737373"/>
<rect x="531" y="119" width="13" height="3" fill="#5f5f5f"/>
<g fill="#fff"><rect x="532" y="122" width="3" height="2"/><rect x="532" y="125" width="3" height="2"/><rect x="532" y="128" width="3" height="2"/><rect x="536" y="122" width="3" height="2"/><rect x="536" y="125" width="3" height="2"/><rect x="536" y="128" width="3" height="2"/><rect x="540" y="122" width="3" height="2"/><rect x="540" y="125" width="3" height="2"/><rect x="540" y="128" width="3" height="2"/></g>
<rect x="552" y="117" width="13" height="12" fill="#737373"/>
<rect x="552" y="117" width="13" height="3" fill="#5f5f5f"/>
<g fill="#fff"><rect x="553" y="120" width="3" height="2"/><rect x="553" y="123" width="3" height="2"/><rect x="553" y="126" width="3" height="2"/><rect x="557" y="120" width="3" height="2"/><rect x="557" y="123" width="3" height="2"/><rect x="557" y="126" width="3" height="2"/><rect x="561" y="120" width="3" height="2"/><rect x="561" y="123" width="3" height="2"/><rect x="561" y="126" width="3" height="2"/></g>
<rect x="557" y="122" width="12" height="12" fill="#f3f3f3"/>
<path d="M558 123H568V133H559L558 132Z" fill="#7f4fa5"/>
<rect x="561" y="124" width="4" height="3" fill="#fff"/><rect x="562" y="130" width="3" height="2" fill="#fff"/>
<rect x="577" y="117" width="13" height="9" fill="#737373"/>
<rect x="577" y="117" width="13" height="3" fill="#5f5f5f"/>
<g fill="#fff"><rect x="578" y="120" width="3" height="2"/><rect x="578" y="123" width="3" height="2"/><rect x="582" y="120" width="3" height="2"/><rect x="582" y="123" width="3" height="2"/><rect x="586" y="120" width="3" height="2"/><rect x="586" y="123" width="3" height="2"/></g>
<path d="M573 116V129H587Z" fill="#f3f3f3"/>
<path d="M574 116.8V128H585.2Z" fill="#3b77bf"/>
<path d="M576.3 122.2V125.8H579.9Z" fill="#fff"/>
<rect x="574" y="129" width="16" height="4" fill="#e8853a"/>
<rect x="575" y="130" width="14" height="2" fill="#fff"/>
<g fill="#e8853a"><rect x="576" y="130" width="1" height="1"/><rect x="578" y="130" width="1" height="1"/><rect x="580" y="130" width="1" height="1"/><rect x="582" y="130" width="1" height="1"/><rect x="584" y="130" width="1" height="1"/><rect x="586" y="130" width="1" height="1"/></g>
<path d="M315.5 176.5L325 186M325 176.5L315.5 186" stroke="#c4c4c4" stroke-width="1.5"/>
<path d="M350.5 181.5L354.8 186L362.5 177" fill="none" stroke="#c8c8c8" stroke-width="2.2"/>
<g fill="none" stroke="#666" stroke-linecap="round"><path d="M386.4 186.2Q387.9 187.2 388.6 184.6L390.3 177.6Q390.9 175.1 393.2 175.1L394.4 175.7" stroke-width="1.5"/><path d="M388.3 178.4H392.7" stroke-width="1.1"/><path d="M392.3 180.9Q393.8 180.5 394.6 182.6Q395.4 184.8 397.3 184.4M397.3 181.1L392.1 184.4" stroke-width="1.2"/></g>
<g fill="#9a9a9a"><rect x="285" y="175.5" width="2" height="2"/><rect x="285" y="179.5" width="2" height="2"/><rect x="285" y="184" width="2" height="2"/></g><path d="M764.5 297.4L768 300.9L774.3 293.6" fill="none" stroke="#3f7c5f" stroke-width="3.9" stroke-linejoin="round"/>
<path d="M764.5 297.4L768 300.9L774.3 293.6" fill="none" stroke="#66a688" stroke-width="2.1" stroke-linejoin="round"/>
<path d="M764.5 317.4L768 320.9L774.3 313.6" fill="none" stroke="#3f7c5f" stroke-width="3.9" stroke-linejoin="round"/>
<path d="M764.5 317.4L768 320.9L774.3 313.6" fill="none" stroke="#66a688" stroke-width="2.1" stroke-linejoin="round"/>
<path d="M764.5 337.4L768 340.9L774.3 333.6" fill="none" stroke="#3f7c5f" stroke-width="3.9" stroke-linejoin="round"/>
<path d="M764.5 337.4L768 340.9L774.3 333.6" fill="none" stroke="#66a688" stroke-width="2.1" stroke-linejoin="round"/>
<path d="M764.5 357.4L768 360.9L774.3 353.6" fill="none" stroke="#3f7c5f" stroke-width="3.9" stroke-linejoin="round"/>
<path d="M764.5 357.4L768 360.9L774.3 353.6" fill="none" stroke="#66a688" stroke-width="2.1" stroke-linejoin="round"/>
<path d="M764.5 377.4L768 380.9L774.3 373.6" fill="none" stroke="#3f7c5f" stroke-width="3.9" stroke-linejoin="round"/>
<path d="M764.5 377.4L768 380.9L774.3 373.6" fill="none" stroke="#66a688" stroke-width="2.1" stroke-linejoin="round"/>
<path d="M764.5 397.4L768 400.9L774.3 393.6" fill="none" stroke="#3f7c5f" stroke-width="3.9" stroke-linejoin="round"/>
<path d="M764.5 397.4L768 400.9L774.3 393.6" fill="none" stroke="#66a688" stroke-width="2.1" stroke-linejoin="round"/>
<path d="M764.5 417.4L768 420.9L774.3 413.6" fill="none" stroke="#3f7c5f" stroke-width="3.9" stroke-linejoin="round"/>
<path d="M764.5 417.4L768 420.9L774.3 413.6" fill="none" stroke="#66a688" stroke-width="2.1" stroke-linejoin="round"/>
<path d="M764.5 437.4L768 440.9L774.3 433.6" fill="none" stroke="#3f7c5f" stroke-width="3.9" stroke-linejoin="round"/>
<path d="M764.5 437.4L768 440.9L774.3 433.6" fill="none" stroke="#66a688" stroke-width="2.1" stroke-linejoin="round"/>
<path d="M764.5 457.4L768 460.9L774.3 453.6" fill="none" stroke="#3f7c5f" stroke-width="3.9" stroke-linejoin="round"/>
<path d="M764.5 457.4L768 460.9L774.3 453.6" fill="none" stroke="#66a688" stroke-width="2.1" stroke-linejoin="round"/>
<path d="M764.5 477.4L768 480.9L774.3 473.6" fill="none" stroke="#3f7c5f" stroke-width="3.9" stroke-linejoin="round"/>
<path d="M764.5 477.4L768 480.9L774.3 473.6" fill="none" stroke="#66a688" stroke-width="2.1" stroke-linejoin="round"/>
<path d="M764.5 497.4L768 500.9L774.3 493.6" fill="none" stroke="#3f7c5f" stroke-width="3.9" stroke-linejoin="round"/>
<path d="M764.5 497.4L768 500.9L774.3 493.6" fill="none" stroke="#66a688" stroke-width="2.1" stroke-linejoin="round"/>
<path d="M764.5 517.4L768 520.9L774.3 513.6" fill="none" stroke="#3f7c5f" stroke-width="3.9" stroke-linejoin="round"/>
<path d="M764.5 517.4L768 520.9L774.3 513.6" fill="none" stroke="#66a688" stroke-width="2.1" stroke-linejoin="round"/>
<path d="M764.4 533.5L773.6 542.5M773.6 533.5L764.4 542.5" fill="none" stroke="#bf4d2d" stroke-width="3.8"/>
<path d="M764.4 533.5L773.6 542.5M773.6 533.5L764.4 542.5" fill="none" stroke="#e2653f" stroke-width="2"/>
<path d="M764.4 553.5L773.6 562.5M773.6 553.5L764.4 562.5" fill="none" stroke="#bf4d2d" stroke-width="3.8"/>
<path d="M764.4 553.5L773.6 562.5M773.6 553.5L764.4 562.5" fill="none" stroke="#e2653f" stroke-width="2"/>
<path d="M764.4 573.5L773.6 582.5M773.6 573.5L764.4 582.5" fill="none" stroke="#bf4d2d" stroke-width="3.8"/>
<path d="M764.4 573.5L773.6 582.5M773.6 573.5L764.4 582.5" fill="none" stroke="#e2653f" stroke-width="2"/><rect x="837" y="473" width="15" height="103" fill="#dadada"/>
<rect x="837.5" y="206.5" width="14" height="14" fill="#fff" stroke="#777777" stroke-width="1"/>
<rect x="837.5" y="221.5" width="14" height="251" fill="#fff" stroke="#777777" stroke-width="1"/>
<path d="M837 221H852" stroke="#777777" stroke-width="1.5"/>
<rect x="837.5" y="576.5" width="14" height="14" fill="#fff" stroke="#777777" stroke-width="1"/>
<path d="M840.8 214.8H848.2L844.5 211Z" fill="#666"/>
<path d="M840.8 582.2H848.2L844.5 586Z" fill="#666"/>
<rect x="788" y="598" width="28" height="15" fill="#dadada"/>
<rect x="530.5" y="598.5" width="14" height="14" fill="#fff" stroke="#777777" stroke-width="1"/>
<rect x="545.5" y="598.5" width="242" height="14" fill="#fff" stroke="#777777" stroke-width="1"/>
<path d="M545 598V613" stroke="#777777" stroke-width="1.5"/>
<rect x="816.5" y="598.5" width="14" height="14" fill="#fff" stroke="#777777" stroke-width="1"/>
<path d="M539.3 602V608.7L534.8 605.35Z" fill="#666"/>
<path d="M821.3 602V608.7L825.8 605.35Z" fill="#666"/>
<g fill="#a6a6a6"><rect x="513" y="599.5" width="2" height="2"/><rect x="513" y="604" width="2" height="2"/><rect x="513" y="608.5" width="2" height="2"/></g>
<path d="M32 601V608.5L28 604.8Z" fill="#c2c2c2"/>
<path d="M57 601V608.5L61 604.8Z" fill="#c2c2c2"/>
<circle cx="207" cy="605" r="7.4" fill="none" stroke="#7a7a7a" stroke-width="1.1"/>
<path d="M203 605H211M207 601V609" stroke="#7a7a7a" stroke-width="1.6"/>
<g fill="#5a5a5a"><rect x="60" y="628.5" width="1.3" height="7.5"/><rect x="60" y="634.8" width="12" height="1.2"/><rect x="70.8" y="624" width="1.2" height="12"/><rect x="66" y="624" width="6" height="3.2"/></g>
<circle cx="61.8" cy="625.8" r="2.7" fill="#5a5a5a" stroke="#f3f3f3" stroke-width="0.8"/>
<g fill="#6a6a6a"><rect x="62.3" y="629.1" width="2.2" height="1.1"/><rect x="62.3" y="631.1" width="2.2" height="1.1"/><rect x="62.3" y="633.1" width="2.2" height="1.1"/><rect x="65" y="629.1" width="2.2" height="1.1"/><rect x="65" y="631.1" width="2.2" height="1.1"/><rect x="65" y="633.1" width="2.2" height="1.1"/><rect x="67.7" y="629.1" width="2.2" height="1.1"/><rect x="67.7" y="631.1" width="2.2" height="1.1"/><rect x="67.7" y="633.1" width="2.2" height="1.1"/></g>
<path d="M96 624.7A5.5 5.5 0 0 0 96.5 636" fill="none" stroke="#555" stroke-width="1.2" stroke-dasharray="2.2 1.3"/>
<path d="M96.7 623V628.8M94.6 626.8L96.7 628.9L98.8 626.8" fill="none" stroke="#555" stroke-width="1.1"/>
<path d="M100.3 626.3L102.4 628.4L100.3 630.5" fill="none" stroke="#555" stroke-width="1.1"/>
<path d="M98 628.8L105.4 637.4M98.5 636.5L105 630.5" stroke="#444" stroke-width="1.5"/>
<rect x="544" y="620" width="40" height="21" fill="#c8c8c8"/>
<g fill="#6a6a6a"><rect x="557" y="623" width="1.2" height="13.2"/><rect x="561" y="623" width="1.2" height="13.2"/><rect x="565" y="623" width="1.2" height="13.2"/><rect x="569" y="623" width="1.2" height="13.2"/><rect x="557" y="623" width="13.2" height="1.2"/><rect x="557" y="627" width="13.2" height="1.2"/><rect x="557" y="631" width="13.2" height="1.2"/><rect x="557" y="635" width="13.2" height="1.2"/></g>
<g fill="none" stroke="#6a6a6a" stroke-width="1.2"><rect x="597.6" y="623.6" width="12.8" height="11.8"/><rect x="600.6" y="625.6" width="6.8" height="7.8"/><path d="M602 627.5H606M602 629.5H606M602 631.5H606"/></g>
<g fill="none" stroke="#6a6a6a" stroke-width="1.2"><rect x="637.6" y="623.6" width="12.8" height="11.8"/><path d="M637.6 630.5H645.5V623.6M641.5 623.6V630.5"/></g>
<rect x="670" y="629" width="8" height="1" fill="#333"/><rect x="683" y="630" width="100" height="1" fill="#3a3a3a"/>
<rect x="731" y="625" width="5" height="11" fill="#666"/>
<rect x="788" y="629" width="8" height="1" fill="#333"/><rect x="791" y="626" width="1" height="8" fill="#333"/></svg>
<div class="a" style="left:101px;top:591px;width:65px;height:23px;background:#ffffff;border-left:1px solid #9b9b9b;border-right:1px solid #9b9b9b"></div>
<div class="a" style="left:104px;top:595px;width:59px;height:18px;background:linear-gradient(#fdfdfe,#e9ecf2 35%,#a3aec8);"></div>
<div class="a" style="left:101px;top:614px;width:65px;height:2px;background:#217346;"></div>
<div class="t" style="left:112.71px;top:597.58px;font-size:12.4px;color:#217346;font-weight:700;transform:scaleX(0.9963);transform-origin:left top;">Sheet1</div>
<div class="t" style="left:7.96px;top:624.64px;font-size:11px;color:#262626;font-weight:400;transform:scaleX(0.9898);transform-origin:left top;">Ready</div>
<div class="t" style="left:108.14px;top:624.28px;font-size:11.4px;color:#262626;font-weight:400;transform:scaleX(1.0037);transform-origin:left top;">Accessibility: Investigate</div>
<div class="t" style="left:808.87px;top:625.1px;font-size:10.5px;color:#262626;font-weight:400;transform:scaleX(1.0223);transform-origin:left top;">100%</div>
<div class="a" style="left:0px;top:0px;width:1px;height:642px;background:#217346;"></div>
<div class="a" style="left:855px;top:0px;width:1px;height:642px;background:#217346;"></div>
<div class="a" style="left:0px;top:641px;width:856px;height:1px;background:#217346;"></div></body></html>
